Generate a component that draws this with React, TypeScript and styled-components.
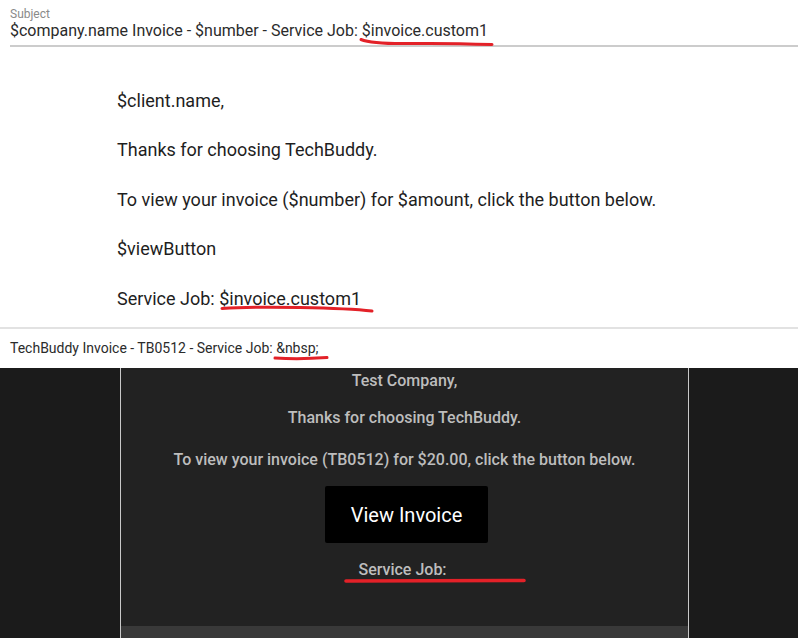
import styled, { createGlobalStyle } from 'styled-components';

const GlobalStyle = createGlobalStyle`
  html, body {
    margin: 0;
    padding: 0;
    background: #ffffff;
  }
  body {
    font-family: Roboto, "Liberation Sans", sans-serif;
    width: 798px;
    height: 638px;
    overflow: hidden;
  }
`;

const App = () => {
  return (
    <Page>
      <GlobalStyle />
      <SubjectField>
        <FieldLabel>Subject</FieldLabel>
        <FieldValue>$company.name Invoice - $number - Service Job: $invoice.custom1</FieldValue>
      </SubjectField>
      <EditorBody>
        <EditorLine>$client.name,</EditorLine>
        <EditorLine>Thanks for choosing TechBuddy.</EditorLine>
        <EditorLine>To view your invoice ($number) for $amount, click the button below.</EditorLine>
        <EditorLine>$viewButton</EditorLine>
        <EditorLine>Service Job: $invoice.custom1</EditorLine>
      </EditorBody>
      <PreviewSubject>TechBuddy Invoice - TB0512 - Service Job: &amp;nbsp;</PreviewSubject>
      <PreviewStage>
        <EmailCard>
          <EmailLine $space={1}>Test Company,</EmailLine>
          <EmailLine $space={13}>Thanks for choosing TechBuddy.</EmailLine>
          <EmailLine $space={18}>To view your invoice (TB0512) for $20.00, click the button below.</EmailLine>
          <ViewButton>View Invoice</ViewButton>
          <EmailLine $space={15}>Service Job:&nbsp;</EmailLine>
          <CardFooter />
        </EmailCard>
      </PreviewStage>
      <Annotations viewBox="0 0 798 638" width="798" height="638">
        <path d="M361 39.5 Q 372 44 410 43.5 T 492 44.5" />
        <path d="M222 308.5 Q 250 306.5 300 307.5 T 372 311" />
        <path d="M275 358 Q 300 359.5 327 357.5" />
        <path d="M346 581 L 524 580.5" strokeWidth="3.6" />
      </Annotations>
    </Page>
  );
};

const Page = styled.div`
  position: relative;
  width: 798px;
  height: 638px;
  display: flex;
  flex-direction: column;
  background: #ffffff;
`;

const SubjectField = styled.div`
  flex-shrink: 0;
  margin-left: 10px;
  padding-top: 7px;
  padding-bottom: 4px;
  border-bottom: 2px solid #cccccc;
  display: flex;
  flex-direction: column;
`;

const FieldLabel = styled.div`
  font-size: 12px;
  line-height: 14px;
  color: #8a8a8a;
`;

const FieldValue = styled.div`
  font-size: 16px;
  line-height: 20px;
  color: #2b2b2b;
`;

const EditorBody = styled.div`
  flex-shrink: 0;
  padding: 40.5px 0 0 117px;
  height: 239px;
  display: flex;
  flex-direction: column;
  gap: 23.5px;
  border-bottom: 2px solid #e2e2e2;
`;

const EditorLine = styled.p`
  flex-shrink: 0;
  margin: 0;
  font-size: 18px;
  line-height: 26px;
  color: #1e1e1e;
`;

const PreviewSubject = styled.div`
  flex-shrink: 0;
  height: 39.5px;
  padding-left: 10px;
  display: flex;
  align-items: center;
  font-size: 14px;
  color: #2b2b2b;
`;

const PreviewStage = styled.div`
  flex: 1;
  min-height: 0;
  background: #1b1b1b;
  display: flex;
  overflow: hidden;
`;

const EmailCard = styled.div`
  margin-left: 120px;
  width: 567px;
  border-left: 1.5px solid #c9c9c9;
  border-right: 1.5px solid #c9c9c9;
  background: #222222;
  display: flex;
  flex-direction: column;
  align-items: center;
`;

const EmailLine = styled.p<{ $space: number }>`
  flex-shrink: 0;
  margin: ${({ $space }) => $space}px 0 0;
  font-size: 16px;
  font-weight: 500;
  line-height: 24px;
  color: #bdbdbd;
  white-space: pre;
`;

const ViewButton = styled.a`
  flex-shrink: 0;
  margin-top: 14px;
  margin-left: 4px;
  width: 163px;
  height: 57px;
  display: flex;
  align-items: center;
  justify-content: center;
  background: #000000;
  border-radius: 2px;
  color: #ffffff;
  font-size: 20px;
  text-decoration: none;
`;

const CardFooter = styled.div`
  flex-shrink: 0;
  align-self: stretch;
  margin-top: 44px;
  height: 30px;
  background: #393939;
`;

const Annotations = styled.svg`
  position: absolute;
  left: 0;
  top: 0;
  pointer-events: none;
  fill: none;
  stroke: #e32128;
  stroke-width: 3;
  stroke-linecap: round;
`;

export default App;
